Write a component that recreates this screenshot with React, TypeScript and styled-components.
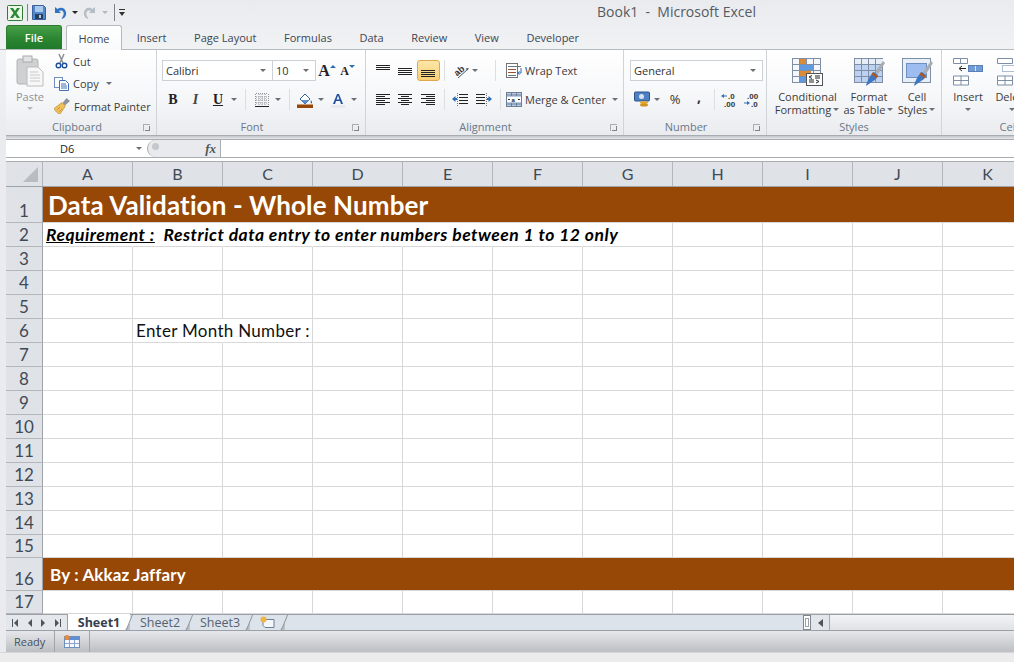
import React from 'react';
import styled, { createGlobalStyle } from 'styled-components';

const UI_FONT = '"Open Sans", "Noto Sans", sans-serif';
const SHEET_FONT = 'Lato, "Open Sans", sans-serif';

const GlobalStyle = createGlobalStyle`
  html, body { margin: 0; padding: 0; background: #eceef1; }
  * { box-sizing: border-box; }
`;

const Window = styled.div`
  width: 1014px;
  height: 662px;
  overflow: hidden;
  display: flex;
  flex-direction: column;
  font-family: ${UI_FONT};
  font-size: 11px;
  color: #3c3c3c;
  background: linear-gradient(#e9ebee 0, #f1f2f4 50px, #e9ebee 140px);
`;

const TitleBar = styled.div`
  height: 25px;
  flex: none;
  display: flex;
  align-items: center;
  padding-left: 7px;
  position: relative;
`;

const QuickTool = styled.span<{ $w: number }>`
  width: ${({ $w }) => $w}px;
  height: 18px;
  display: inline-flex;
  align-items: center;
  justify-content: center;
  flex: none;
`;

const QuickSep = styled.span`
  width: 1px;
  height: 17px;
  background: #7d8288;
  flex: none;
`;

const WindowTitle = styled.div`
  position: absolute;
  left: 597px;
  top: 2px;
  font-size: 14px;
  line-height: 20px;
  color: #555b62;
  white-space: pre;
`;

const TabStrip = styled.div`
  height: 25px;
  flex: none;
  display: flex;
  align-items: flex-end;
  padding-left: 6px;
  border-bottom: 1px solid #b6b9be;
`;

const FileTab = styled.div`
  width: 56px;
  height: 24px;
  display: flex;
  align-items: center;
  justify-content: center;
  color: #fff;
  font-weight: 600;
  font-size: 11px;
  border: 1px solid #2c7a2f;
  border-bottom: none;
  border-radius: 3px 3px 0 0;
  background: linear-gradient(#47a048, #2b8531 55%, #1f7a2b);
  margin-right: 4px;
`;

const HomeTab = styled.div`
  width: 56px;
  height: 25px;
  margin-bottom: -1px;
  margin-right: 1px;
  display: flex;
  align-items: center;
  justify-content: center;
  color: #3b4654;
  background: linear-gradient(#ffffff, #f9fafb);
  border: 1px solid #b6b9be;
  border-bottom: none;
  border-radius: 3px 3px 0 0;
`;

const MenuTab = styled.div`
  height: 24px;
  padding: 0 13.8px;
  display: flex;
  align-items: center;
  color: #3b4654;
  white-space: nowrap;
`;

const Ribbon = styled.div`
  height: 86px;
  flex: none;
  display: flex;
  margin-left: 6px;
  overflow: hidden;
  background: linear-gradient(#ffffff, #f6f7f9 55%, #e9ebee);
  border-bottom: 1px solid #a9adb2;
`;

const RibbonShade = styled.div`
  height: 3px;
  flex: none;
  margin-left: 6px;
  background: linear-gradient(#c3c6ca, #e6e8eb);
`;

const Group = styled.section<{ $w: number }>`
  width: ${({ $w }) => $w}px;
  flex: none;
  display: flex;
  flex-direction: column;
  position: relative;
  border-right: 1px solid #d0d3d8;
`;

const GroupBody = styled.div<{ $pad?: number }>`
  flex: 1;
  display: flex;
  flex-direction: column;
  padding: 10px 0 0 ${({ $pad }) => $pad ?? 0}px;
  min-height: 0;
`;

const GroupLabel = styled.div<{ $right?: number }>`
  height: 16px;
  line-height: 15px;
  flex: none;
  text-align: center;
  padding-right: ${({ $right }) => $right ?? 0}px;
  color: #6a7788;
  white-space: nowrap;
`;

const Launcher = styled.span`
  position: absolute;
  right: 6px;
  bottom: 4px;
  width: 7px;
  height: 7px;
  border-left: 1px solid #a9adb3;
  border-top: 1px solid #a9adb3;
  &::after {
    content: '';
    position: absolute;
    right: 0;
    bottom: 0;
    width: 4px;
    height: 4px;
    border-right: 1px solid #7d848c;
    border-bottom: 1px solid #7d848c;
  }
`;

const ToolRow = styled.div<{ $top?: number }>`
  display: flex;
  align-items: center;
  height: 21px;
  margin-top: ${({ $top }) => $top ?? 0}px;
`;

const Tool = styled.span<{ $w: number; $on?: boolean }>`
  width: ${({ $w }) => $w}px;
  height: 21px;
  flex: none;
  display: inline-flex;
  align-items: center;
  justify-content: center;
  border-radius: 3px;
  border: ${({ $on }) => ($on ? '1px solid #e0a84c' : 'none')};
  background: ${({ $on }) => ($on ? 'linear-gradient(#fde6a8, #fbcf75)' : 'none')};
`;

const ToolSep = styled.span<{ $w: number }>`
  width: ${({ $w }) => $w}px;
  height: 21px;
  flex: none;
  display: inline-flex;
  justify-content: center;
  &::after {
    content: '';
    width: 1px;
    background: #dcdee2;
  }
`;

const Caret = styled.span<{ $w?: number; $tone?: string }>`
  width: ${({ $w }) => $w ?? 10}px;
  flex: none;
  display: inline-flex;
  justify-content: center;
  &::after {
    content: '';
    border-left: 3px solid transparent;
    border-right: 3px solid transparent;
    border-top: 3px solid ${({ $tone }) => $tone ?? '#6b7076'};
  }
`;

const Glyph = styled.span<{ $size?: number; $italic?: boolean; $under?: boolean; $up?: number; $tone?: string; $weight?: number }>`
  font-family: "Liberation Serif", serif;
  font-weight: ${({ $weight }) => $weight ?? 700};
  font-size: ${({ $size }) => $size ?? 14}px;
  font-style: ${({ $italic }) => ($italic ? 'italic' : 'normal')};
  text-decoration: ${({ $under }) => ($under ? 'underline' : 'none')};
  color: ${({ $tone }) => $tone ?? '#222'};
  margin-top: ${({ $up }) => -($up ?? 0)}px;
  line-height: 1;
`;

const SansGlyph = styled(Glyph)`
  font-family: ${UI_FONT};
`;

const Clip = styled.div`
  display: flex;
  height: 100%;
`;

const PasteButton = styled.div`
  width: 48px;
  flex: none;
  display: flex;
  flex-direction: column;
  align-items: center;
  color: #8e9298;
  margin-top: -5px;
  line-height: 14px;
  gap: 3px;
`;

const ClipList = styled.div`
  display: flex;
  flex-direction: column;
  gap: 0.5px;
  margin-top: -10px;
`;

const ClipItem = styled.div`
  height: 22px;
  display: flex;
  align-items: center;
  gap: 4px;
  white-space: nowrap;
`;

const ComboBox = styled.div<{ $w: number }>`
  width: ${({ $w }) => $w}px;
  height: 21px;
  flex: none;
  display: flex;
  align-items: center;
  justify-content: space-between;
  padding: 0 4px 0 3px;
  background: #fff;
  border: 1px solid #cdd0d5;
  margin-left: -1px;
  &:first-child { margin-left: 0; }
  color: #333;
`;

const TextTool = styled.div`
  display: flex;
  align-items: center;
  gap: 3px;
  height: 21px;
  white-space: nowrap;
`;

const BigRow = styled.div`
  display: flex;
  margin-top: -5px;
`;

const BigButton = styled.div<{ $w: number }>`
  width: ${({ $w }) => $w}px;
  flex: none;
  display: flex;
  flex-direction: column;
  align-items: center;
  text-align: center;
  line-height: 13px;
  white-space: nowrap;
`;

const BigIcon = styled.div`
  height: 34px;
  margin-bottom: 1px;
  display: flex;
  align-items: center;
`;

const BigLine = styled.div`
  display: flex;
  align-items: center;
  height: 13px;
`;

const FormulaBar = styled.div`
  flex: none;
  margin-left: 6px;
  display: flex;
  align-items: stretch;
  height: 19px;
  background: #fff;
  border-top: 1px solid #a9adb2;
  border-bottom: 1px solid #a9adb2;
`;

const NameBox = styled.div`
  width: 141px;
  flex: none;
  display: flex;
  align-items: center;
  padding: 0 3px 0 54px;
  justify-content: space-between;
  color: #222;
`;

const FxZone = styled.div`
  width: 74px;
  flex: none;
  display: flex;
  align-items: center;
  justify-content: space-between;
  padding: 0 4px 0 4px;
  border-right: 1px solid #a9adb2;
  border-left: 1px solid #a9adb2;
  border-radius: 9px 0 0 9px;
  background: #e8eaed;
`;

const Knob = styled.span`
  width: 7px;
  height: 7px;
  margin-top: -4px;
  border-radius: 50%;
  background: #c4c7cb;
`;

const FxMark = styled.span`
  font-family: "Liberation Serif", serif;
  font-style: italic;
  font-weight: 700;
  font-size: 13px;
  color: #555;
`;

const FormulaGap = styled.div`
  height: 4px;
  flex: none;
  margin-left: 6px;
  background: #fff;
  border-bottom: 1px solid #a9adb2;
`;

const Sheet = styled.div`
  flex: none;
  margin-left: 6px;
  background: #fff;
  overflow: hidden;
  font-family: ${SHEET_FONT};
`;

const HeaderRow = styled.div`
  display: flex;
  height: 25px;
  background: #dfe2e7;
  border-bottom: 1px solid #9ea3a9;
`;

const Corner = styled.div`
  width: 37px;
  flex: none;
  display: flex;
  align-items: flex-end;
  justify-content: flex-end;
  padding: 0 4px 4px 0;
  border-right: 1px solid #b3b7bc;
  &::after {
    content: '';
    border-left: 15px solid transparent;
    border-bottom: 15px solid #b9bdc2;
  }
`;

const ColHead = styled.div`
  width: 90px;
  flex: none;
  text-align: center;
  line-height: 24px;
  font-size: 16px;
  color: #3f4a57;
  border-right: 1px solid #b3b7bc;
`;

const SheetRow = styled.div<{ $h: number }>`
  display: flex;
  height: ${({ $h }) => $h}px;
`;

const RowHead = styled.div`
  width: 37px;
  flex: none;
  display: flex;
  align-items: flex-end;
  justify-content: center;
  padding-bottom: 1px;
  font-size: 17px;
  line-height: 21px;
  color: #3f4a57;
  background: #dfe2e7;
  border-right: 1px solid #9ea3a9;
  border-bottom: 1px solid #b3b7bc;
`;

const Cell = styled.div<{ $open?: boolean }>`
  width: 90px;
  flex: none;
  position: relative;
  white-space: pre;
  line-height: 23px;
  font-size: 17px;
  color: #111;
  border-bottom: 1px solid #d8d8d8;
  border-right: 1px solid ${({ $open }) => ($open ? 'transparent' : '#d8d8d8')};
`;

const CellText = styled.span<{ $left: number }>`
  position: relative;
  z-index: 1;
  letter-spacing: 0.3px;
  padding-left: ${({ $left }) => $left}px;
`;

const Requirement = styled.span`
  font-weight: 700;
  font-style: italic;
  font-size: 17.5px;
  letter-spacing: 0.5px;
  padding-left: 3px;
  color: #000;
  position: relative;
  z-index: 1;
  line-height: 24px;
`;

const Underlined = styled.span`
  text-decoration: underline;
`;

const Banner = styled.div<{ $size: number; $left: number; $track: number }>`
  flex: 1;
  display: flex;
  align-items: center;
  background: #974706;
  color: #fff;
  font-weight: 700;
  white-space: nowrap;
  font-size: ${({ $size }) => $size}px;
  letter-spacing: ${({ $track }) => $track}px;
  padding-left: ${({ $left }) => $left}px;
  border-bottom: 1px solid #d8d8d8;
`;

const SheetTabs = styled.div`
  height: 17px;
  flex: none;
  margin-left: 6px;
  display: flex;
  align-items: stretch;
  background: #dde3ea;
  border-top: 1px solid #9aa0a6;
  border-bottom: 1px solid #9aa0a6;
`;

const TabNav = styled.div`
  width: 62px;
  flex: none;
  display: flex;
  align-items: center;
  justify-content: space-around;
  padding: 0 2px;
  background: #e4e7ec;
  border-right: 1px solid #9aa0a6;
`;

const SheetTab = styled.div<{ $active?: boolean; $w: number }>`
  width: ${({ $w }) => $w}px;
  flex: none;
  position: relative;
  display: flex;
  align-items: center;
  justify-content: center;
  font-size: 12.5px;
  font-weight: ${({ $active }) => ($active ? 700 : 400)};
  color: ${({ $active }) => ($active ? '#37404c' : '#56616f')};
  background: ${({ $active }) => ($active ? '#fff' : 'transparent')};
  margin-top: ${({ $active }) => ($active ? '-1px' : '0')};
  &::before {
    content: '';
    position: absolute;
    right: 0;
    bottom: 0;
    border-left: 5px solid transparent;
    border-bottom: 7px solid #bcc2c9;
  }
  &::after {
    content: '';
    position: absolute;
    right: 0;
    top: 0;
    bottom: 0;
    width: 1px;
    background: #8d949b;
    transform: skewX(-22deg);
  }
`;

const TabSpacer = styled.div`
  flex: 1;
`;

const SplitHandle = styled.div`
  width: 8px;
  flex: none;
  background: #fff;
  border: 1px solid #7f858b;
  display: flex;
  justify-content: center;
  &::after {
    content: '';
    width: 2px;
    margin: 2px 0;
    border: 1px solid #9aa0a6;
  }
`;

const ScrollArrow = styled.div`
  width: 18px;
  flex: none;
  display: flex;
  align-items: center;
  justify-content: center;
  background: #e3e6ea;
  &::after {
    content: '';
    border-top: 4px solid transparent;
    border-bottom: 4px solid transparent;
    border-right: 5px solid #4d555d;
  }
`;

const ScrollThumb = styled.div`
  width: 185px;
  flex: none;
  background: linear-gradient(#f2f3f5, #dfe2e6);
  border-left: 1px solid #a5aab0;
`;

const StatusBar = styled.div`
  height: 21px;
  flex: none;
  margin-left: 6px;
  display: flex;
  align-items: stretch;
  background: linear-gradient(#e6e7ea, #bcbfc3);
  color: #47505b;
`;

const StatusCell = styled.div<{ $w: number; $pad?: number }>`
  width: ${({ $w }) => $w}px;
  flex: none;
  display: flex;
  align-items: center;
  padding-left: ${({ $pad }) => $pad ?? 0}px;
  border-right: 1px solid #a2a6ab;
`;

const FootStrip = styled.div`
  flex: 1;
  background: #ececec;
  border-top: 1px solid #d6d6d6;
`;

const IconSvg = styled.svg`
  display: block;
  flex: none;
`;

// Small drawings
const Svg = ({ w, h, children }: { w: number; h: number; children: React.ReactNode }) => (
  <IconSvg width={w} height={h} viewBox={`0 0 ${w} ${h}`}>
    {children}
  </IconSvg>
);

const ExcelLogo = () => (
  <Svg w={16} h={16}>
    <rect x=".5" y=".5" width="15" height="15" rx="1" fill="#eef5ea" stroke="#2f7d32" />
    <path d="M3 3h3l2 3 2-3h3l-3.5 5 3.5 5h-3l-2-3-2 3H3l3.5-5z" fill="#2a8a34" />
  </Svg>
);

const SaveIcon = () => (
  <Svg w={14} h={15}>
    <path d="M.5.500h11l2 2v12H.5z" fill="#4f86cc" stroke="#3a629c" />
    <rect x="3" y="1" width="8" height="6" fill="#a9c8ea" />
    <rect x="3" y="9" width="8" height="5" fill="#27405f" />
    <rect x="7" y="10" width="2" height="3" fill="#b9c9de" />
  </Svg>
);

const UndoIcon = ({ color }: { color: string }) => (
  <Svg w={13} h={14}>
    <path d="M1 1v6h6L5 5c3-1.500 5.500.5 4.500 4l-2 4c4-1 5-4 4.500-7C11 2 7 .5 3.500 3z" fill={color} />
  </Svg>
);

const RedoIcon = ({ color }: { color: string }) => (
  <Svg w={13} h={14}>
    <path d="M12 1v6H6l2-2C5 3.500 2.500 5.500 3.500 9l2 4C1.500 12 .5 9 1 6c1-4 5-5.500 8.500-3z" fill={color} />
  </Svg>
);

const CustomizeIcon = () => (
  <Svg w={8} h={9}>
    <path d="M1 1.500h6" stroke="#333" />
    <path d="M1 4h6L4 8z" fill="#333" />
  </Svg>
);

const PasteIcon = () => (
  <Svg w={28} h={32}>
    <rect x="1" y="4" width="21" height="25" rx="2" fill="#cfd0d2" stroke="#b3b4b6" />
    <rect x="7" y="1" width="9" height="6" fill="#e2e3e4" stroke="#a9aaac" />
    <path d="M11 12h11l5 5v14H11z" fill="#f7f7f7" stroke="#bcbcbc" />
    <path d="M14 17h8M14 20h10M14 23h10M14 26h10" stroke="#c9c9c9" />
  </Svg>
);

const CutIcon = () => (
  <Svg w={15} h={16}>
    <path d="M5 1l4 9M10 1L6 10" stroke="#8a8f96" strokeWidth="1.500" />
    <circle cx="4.500" cy="12.500" r="2.300" fill="none" stroke="#1f4f9c" strokeWidth="1.400" />
    <circle cx="10.500" cy="12.500" r="2.300" fill="none" stroke="#1f4f9c" strokeWidth="1.400" />
  </Svg>
);

const CopyIcon = () => (
  <Svg w={15} h={15}>
    <rect x=".5" y="1.500" width="8" height="10" fill="#fff" stroke="#6e8fbd" />
    <path d="M5.500 4.500h6l3 3v7h-9z" fill="#fff" stroke="#3f6fb5" />
    <path d="M7 8h5M7 10h6M7 12h6" stroke="#3f6fb5" />
  </Svg>
);

const BrushIcon = () => (
  <Svg w={16} h={16}>
    <path d="M9 5l3.500-4.500L15.500 3 11 7z" fill="#8f949a" stroke="#6f747a" strokeWidth=".5" />
    <path d="M0 10.500l8-6 3.500 3.500-5.500 8C3.500 15.500 1 13 0 10.500z" fill="#edc05c" stroke="#b97f25" strokeWidth=".6" />
    <path d="M3 12l3-3M5 14l3-3" stroke="#c18a2d" strokeWidth=".7" />
  </Svg>
);

const BorderIcon = () => (
  <Svg w={14} h={14}>
    <path d="M.5 1v11M4 1v11M7 1v11M10 1v11M13.500 1v11M1 .5h12M1 4h12M1 7h12M1 10h12" stroke="#8f949a" strokeDasharray="1 1" />
    <path d="M0 13.500h14" stroke="#222" />
  </Svg>
);

const FillIcon = () => (
  <Svg w={16} h={16}>
    <path d="M3 7l5-5 5 5-5 5z" fill="#fff" stroke="#2f5f9e" />
    <path d="M4 8h8l-4 4z" fill="#5d90cf" />
    <path d="M14 8c1 2 1.500 3 .5 3.500-1 0-1-2-.5-3.500z" fill="#2f5f9e" />
    <rect x="0" y="12.500" width="16" height="3.500" fill="#974706" />
  </Svg>
);

const FontColorIcon = () => (
  <Svg w={14} h={16}>
    <rect x="0" y="13" width="14" height="3" fill="#e8e9eb" />
    <path d="M2 12l4-10h2l4 10h-2l-1-3H5l-1 3zM5.500 7.500h3L7 3.500z" fill="#1f4f9c" fillRule="evenodd" />
  </Svg>
);

const SizeArrow = ({ up }: { up: boolean }) => (
  <Svg w={6} h={14}>
    <path d={up ? 'M0 4l3-3 3 3z' : 'M0 1l3 3 3-3z'} fill="#2f6db5" />
  </Svg>
);

const Lines = ({ rows, pad = 0 }: { rows: [number, number][]; pad?: number }) => (
  <Svg w={15} h={13}>
    {rows.map(([x, w], i) => (
      <rect key={i} x={x} y={pad + i * 2} width={w} height="1" fill="#222" />
    ))}
  </Svg>
);

const full: [number, number][] = [[0, 14], [0, 14], [0, 14]];
const TopAlign = () => <Lines rows={full} pad={1} />;
const MidAlign = () => <Lines rows={[...full, [0, 14]]} pad={4} />;
const BotAlign = () => <Lines rows={[...full, [0, 14]]} pad={6} />;
const LeftAlign = () => <Lines rows={[[0, 14], [0, 9], [0, 14], [0, 9], [0, 14], [0, 9]]} pad={1} />;
const CenterAlign = () => <Lines rows={[[0, 14], [3, 8], [0, 14], [3, 8], [0, 14], [3, 8]]} pad={1} />;
const RightAlign = () => <Lines rows={[[0, 14], [5, 9], [0, 14], [5, 9], [0, 14], [5, 9]]} pad={1} />;

const OrientIcon = () => (
  <Svg w={17} h={16}>
    <text x="1" y="11" fontFamily="'Liberation Sans', sans-serif" fontWeight="700" fontSize="9" fill="#333" transform="rotate(-40 6 8)">ab</text>
    <path d="M5 15L15 6" stroke="#555" />
    <path d="M16 5l-3.500.5 2 2z" fill="#555" />
  </Svg>
);

const IndentIcon = ({ flip }: { flip?: boolean }) => (
  <Svg w={16} h={14}>
    <g transform={flip ? 'matrix(-1 0 0 1 16 0)' : undefined}>
      <path d="M7 1.500h9M7 4.500h9M7 7.500h9M7 10.500h9" stroke="#222" />
      <path d="M5.500 0v14" stroke="#777" strokeDasharray="1 1" />
      <path d="M0 6l3.500-3v2H5v2H3.500v2z" fill="#2f6db5" />
    </g>
  </Svg>
);

const WrapIcon = () => (
  <Svg w={16} h={15}>
    <rect x=".5" y=".5" width="11" height="14" fill="#fff" stroke="#70757b" />
    <path d="M2 3.500h13" stroke="#70757b" />
    <path d="M2 6.500h8M2 9.500h8" stroke="#a0522d" />
    <path d="M2 12.500h8" stroke="#70757b" />
    <path d="M15 5v5h-3M13.500 8.500l-2 1.500 2 1.500" stroke="#2f6db5" fill="none" />
  </Svg>
);

const MergeIcon = () => (
  <Svg w={16} h={15}>
    <rect x=".5" y=".5" width="15" height="14" fill="#b8cbe4" stroke="#6d7f97" />
    <rect x="1" y="5" width="14" height="5" fill="#fff" />
    <path d="M1 3h14M1 12h14M5.500 1v3M10.500 1v3M5.500 11v3M10.500 11v3" stroke="#6d7f97" />
    <text x="5.500" y="9.500" fontFamily="'Liberation Sans', sans-serif" fontWeight="700" fontSize="6" fill="#222">a</text>
    <path d="M2 7.500h2M12 7.500h2" stroke="#333" />
  </Svg>
);

const CurrencyIcon = () => (
  <Svg w={16} h={17}>
    <rect x=".5" y="1" width="15" height="9" rx="1" fill="#4f80c2" stroke="#2a548e" />
    <circle cx="7.500" cy="5.500" r="2.500" fill="#d7e3f2" />
    <ellipse cx="10" cy="11.500" rx="4" ry="1.500" fill="#e3a92e" />
    <ellipse cx="10" cy="14" rx="4" ry="1.500" fill="#cf9322" />
  </Svg>
);

const DecimalIcon = ({ more }: { more?: boolean }) => (
  <Svg w={17} h={16}>
    <text x={more ? 3 : 7} y="7" fontFamily="'Liberation Sans', sans-serif" fontWeight="700" fontSize="8" fill="#333">{more ? '.00' : '.0'}</text>
    <text x={more ? 7 : 3} y="15" fontFamily="'Liberation Sans', sans-serif" fontWeight="700" fontSize="8" fill="#333">{more ? '.0' : '.00'}</text>
    {more ? (
      <path d="M0 10.500h3V9l3 2-3 2v-1.500H0z" fill="#2f6db5" />
    ) : (
      <path d="M6 3.500H3V2L0 4l3 2V4.500h3z" fill="#2f6db5" />
    )}
  </Svg>
);

const CondFormatIcon = () => (
  <Svg w={31} h={28}>
    {[0, 7, 14, 21].map(x => [0, 6, 12, 18].map(y => (
      <rect key={`${x}-${y}`} x={x + .5} y={y + .5} width="7" height="6" fill="#f4f7fb" stroke="#7d8ea5" />
    )))}
    <rect x="8" y="1" width="6" height="5" fill="#d98b3a" />
    <rect x="8" y="7" width="14" height="5" fill="#5f9ae0" />
    <rect x="8" y="13" width="11" height="5" fill="#d98b3a" />
    <rect x="8" y="19" width="6" height="5" fill="#5f9ae0" />
    <rect x="14.500" y="15.500" width="16" height="12" fill="#fff" stroke="#555" />
    <path d="M17 19l3-1.500M17 19l3 1.500M23 18h5M23 20h5M17 24h5M17 22h5M24 22l3 1.500-3 1.500" stroke="#222" fill="none" />
  </Svg>
);

const Paintbrush = () => (
  <>
    <path d="M29 3l2 2-7 11-3-2z" fill="#a8adb3" />
    <path d="M20 14l4 3-2 4-10 7c1-5 4-11 8-14z" fill="#3f76c4" />
    <path d="M19 14l5 4-1.500 2.500-5-4z" fill="#a65a2c" />
  </>
);

const TableIcon = () => (
  <Svg w={31} h={28}>
    <rect x=".5" y=".5" width="28" height="24" fill="#bcd2f0" stroke="#7d8ea5" />
    <rect x="1" y="1" width="28" height="5" fill="#e7eef8" />
    <path d="M7.500 1v24M14.500 1v24M21.500 1v24M1 6.500h28M1 12.500h28M1 18.500h28" stroke="#7d8ea5" />
    <Paintbrush />
  </Svg>
);

const CellStyleIcon = () => (
  <Svg w={31} h={28}>
    <rect x=".5" y=".5" width="28" height="24" fill="#e7eef8" stroke="#7d8ea5" />
    <rect x="4.500" y="5.500" width="20" height="14" fill="#9dbcf0" stroke="#6f8fbe" />
    <Paintbrush />
  </Svg>
);

const InsertIcon = () => (
  <Svg w={31} h={28}>
    <path d="M.5.500h14v5H.5zM.5 18h15v9H.5zM8 18v9M1 22.500h14M7.500 1v4" fill="#fff" stroke="#7d8ea5" />
    <rect x="15.500" y="7.500" width="14" height="6" fill="#6f9bd6" stroke="#5a7fb3" />
    <path d="M22.500 8v5" stroke="#dbe6f5" />
    <path d="M13 10.500H7M9 8l-3 2.500L9 13" stroke="#222" fill="none" />
  </Svg>
);

const DeleteIcon = () => (
  <Svg w={31} h={28}>
    <path d="M.5.500h15v5H.5zM.5 18h15v9H.5zM8 18v9M1 22.500h14" fill="#fff" stroke="#7d8ea5" />
    <rect x="5.500" y="7.500" width="14" height="6" fill="#fff" stroke="#5a7fb3" strokeDasharray="1 1" />
    <path d="M20 8l6 6" stroke="#d98b3a" strokeWidth="2" />
  </Svg>
);

const NavIcon = ({ d, bar }: { d: 'l' | 'r'; bar?: boolean }) => (
  <Svg w={7} h={8}>
    <path d={d === 'l' ? 'M6 0v8L2 4z' : 'M1 0v8l4-4z'} fill="#4d555d" />
    {bar && <path d={d === 'l' ? 'M.5 0v8' : 'M6.500 0v8'} stroke="#4d555d" />}
  </Svg>
);

const NewSheetIcon = () => (
  <Svg w={15} h={13}>
    <path d="M3 3.500h11v8H5l-2-2z" fill="#f3f6fa" stroke="#6d7f97" />
    <circle cx="3.500" cy="3.500" r="3" fill="#f0b440" />
  </Svg>
);

const MacroIcon = () => (
  <Svg w={16} h={13}>
    <rect x=".5" y="1.500" width="15" height="11" fill="#f4f7fb" stroke="#6d8fbd" />
    <rect x="1" y="2" width="14" height="3" fill="#5f8fcf" />
    <path d="M5.500 5v7M10.500 5v7M1 8.500h14" stroke="#8aa5c9" />
    <circle cx="3" cy="2.500" r="2.500" fill="#e8883a" />
  </Svg>
);

const COLUMNS = ['A', 'B', 'C', 'D', 'E', 'F', 'G', 'H', 'I', 'J', 'K'];

const PlainCells = () => (
  <>
    {COLUMNS.map(c => (
      <Cell key={c} />
    ))}
  </>
);

const App = () => (
  <Window>
    <GlobalStyle />
    <TitleBar>
      <QuickTool $w={16}><ExcelLogo /></QuickTool>
      <QuickTool $w={4} />
      <QuickSep />
      <QuickTool $w={21}><SaveIcon /></QuickTool>
      <QuickTool $w={22}><UndoIcon color="#2f74c4" /></QuickTool>
      <Caret $w={7} $tone="#222" />
      <QuickTool $w={23}><RedoIcon color="#b7bdc4" /></QuickTool>
      <Caret $w={7} $tone="#b5b8bd" />
      <QuickTool $w={6} />
      <QuickSep />
      <QuickTool $w={14}><CustomizeIcon /></QuickTool>
      <WindowTitle>{'Book1  -  Microsoft Excel'}</WindowTitle>
    </TitleBar>

    <TabStrip>
      <FileTab>File</FileTab>
      <HomeTab>Home</HomeTab>
      {['Insert', 'Page Layout', 'Formulas', 'Data', 'Review', 'View', 'Developer'].map(t => (
        <MenuTab key={t}>{t}</MenuTab>
      ))}
    </TabStrip>

    <Ribbon>
      <Group $w={151}>
        <GroupBody>
          <Clip>
            <PasteButton>
              <PasteIcon />
              <span>Paste</span>
              <Caret $tone="#b5b8bd" />
            </PasteButton>
            <ClipList>
              <ClipItem><CutIcon />Cut</ClipItem>
              <ClipItem><CopyIcon />Copy<Caret $w={12} /></ClipItem>
              <ClipItem><BrushIcon />Format Painter</ClipItem>
            </ClipList>
          </Clip>
        </GroupBody>
        <GroupLabel $right={8}>Clipboard</GroupLabel>
        <Launcher />
      </Group>

      <Group $w={209}>
        <GroupBody $pad={5}>
          <ToolRow>
            <ComboBox $w={111}>Calibri<Caret /></ComboBox>
            <ComboBox $w={44}>10<Caret /></ComboBox>
            <Tool $w={22}><Glyph $size={16}>A</Glyph><SizeArrow up /></Tool>
            <Tool $w={19}><Glyph $size={12}>A</Glyph><SizeArrow up={false} /></Tool>
          </ToolRow>
          <ToolRow $top={8}>
            <Tool $w={22}><Glyph>B</Glyph></Tool>
            <Tool $w={23}><Glyph $italic $tone="#444">I</Glyph></Tool>
            <Tool $w={22}><Glyph $under>U</Glyph></Tool>
            <Caret />
            <ToolSep $w={12} />
            <Tool $w={22}><BorderIcon /></Tool>
            <Caret />
            <ToolSep $w={12} />
            <Tool $w={20}><FillIcon /></Tool>
            <Caret $w={12} />
            <Tool $w={22}><FontColorIcon /></Tool>
            <Caret />
          </ToolRow>
        </GroupBody>
        <GroupLabel $right={18}>Font</GroupLabel>
        <Launcher />
      </Group>

      <Group $w={258}>
        <GroupBody $pad={6}>
          <ToolRow>
            <Tool $w={22}><TopAlign /></Tool>
            <Tool $w={23}><MidAlign /></Tool>
            <Tool $w={23} $on><BotAlign /></Tool>
            <ToolSep $w={8} />
            <Tool $w={36}><OrientIcon /><Caret $w={9} /></Tool>
            <ToolSep $w={22} />
            <TextTool><WrapIcon />Wrap Text</TextTool>
          </ToolRow>
          <ToolRow $top={8}>
            <Tool $w={22}><LeftAlign /></Tool>
            <Tool $w={23}><CenterAlign /></Tool>
            <Tool $w={23}><RightAlign /></Tool>
            <ToolSep $w={8} />
            <Tool $w={24}><IndentIcon /></Tool>
            <Tool $w={23}><IndentIcon flip /></Tool>
            <ToolSep $w={11} />
            <TextTool><MergeIcon />Merge &amp; Center<Caret $w={12} /></TextTool>
          </ToolRow>
        </GroupBody>
        <GroupLabel $right={18}>Alignment</GroupLabel>
        <Launcher />
      </Group>

      <Group $w={143}>
        <GroupBody $pad={6}>
          <ToolRow>
            <ComboBox $w={133}>General<Caret /></ComboBox>
          </ToolRow>
          <ToolRow $top={8}>
            <Tool $w={24}><CurrencyIcon /></Tool>
            <Caret $w={6} />
            <Tool $w={4} />
            <Tool $w={22}><SansGlyph $size={13} $tone="#333" $weight={400}>%</SansGlyph></Tool>
            <Tool $w={2} />
            <Tool $w={22}><SansGlyph $size={14} $up={5} $tone="#333">,</SansGlyph></Tool>
            <ToolSep $w={8} />
            <Tool $w={23}><DecimalIcon /></Tool>
            <Tool $w={23}><DecimalIcon more /></Tool>
          </ToolRow>
        </GroupBody>
        <GroupLabel $right={18}>Number</GroupLabel>
        <Launcher />
      </Group>

      <Group $w={175}>
        <GroupBody $pad={7}>
          <BigRow>
            <BigButton $w={67}>
              <BigIcon><CondFormatIcon /></BigIcon>
              <BigLine>Conditional</BigLine>
              <BigLine>Formatting<Caret $w={9} /></BigLine>
            </BigButton>
            <BigButton $w={56}>
              <BigIcon><TableIcon /></BigIcon>
              <BigLine>Format</BigLine>
              <BigLine>as Table<Caret $w={9} /></BigLine>
            </BigButton>
            <BigButton $w={40}>
              <BigIcon><CellStyleIcon /></BigIcon>
              <BigLine>Cell</BigLine>
              <BigLine>Styles<Caret $w={9} /></BigLine>
            </BigButton>
          </BigRow>
        </GroupBody>
        <GroupLabel>Styles</GroupLabel>
      </Group>

      <Group $w={140}>
        <GroupBody>
          <BigRow>
            <BigButton $w={52}>
              <BigIcon><InsertIcon /></BigIcon>
              <BigLine>Insert</BigLine>
              <BigLine><Caret /></BigLine>
            </BigButton>
            <BigButton $w={36}>
              <BigIcon><DeleteIcon /></BigIcon>
              <BigLine>Delete</BigLine>
              <BigLine><Caret /></BigLine>
            </BigButton>
          </BigRow>
        </GroupBody>
        <GroupLabel>Cells</GroupLabel>
      </Group>
    </Ribbon>
    <RibbonShade />

    <FormulaBar>
      <NameBox>D6<Caret /></NameBox>
      <FxZone><Knob /><FxMark>fx</FxMark></FxZone>
    </FormulaBar>
    <FormulaGap />

    <Sheet>
      <HeaderRow>
        <Corner />
        {COLUMNS.map(c => <ColHead key={c}>{c}</ColHead>)}
      </HeaderRow>
      <SheetRow $h={36}>
        <RowHead>1</RowHead>
        <Banner $size={26} $left={5} $track={0.12}>Data Validation - Whole Number</Banner>
      </SheetRow>
      <SheetRow $h={24}>
        <RowHead>2</RowHead>
        <Cell $open>
          <Requirement><Underlined>Requirement :</Underlined>{'  Restrict data entry to enter numbers between 1 to 12 only'}</Requirement>
        </Cell>
        {COLUMNS.slice(1).map((c, i) => <Cell key={c} $open={i < 5} />)}
      </SheetRow>
      {[3, 4, 5].map(n => (
        <SheetRow $h={24} key={n}>
          <RowHead>{n}</RowHead>
          <PlainCells />
        </SheetRow>
      ))}
      <SheetRow $h={24}>
        <RowHead>6</RowHead>
        <Cell />
        <Cell $open><CellText $left={3}>Enter Month Number :</CellText></Cell>
        {COLUMNS.slice(2).map(c => <Cell key={c} />)}
      </SheetRow>
      {[7, 8, 9, 10, 11, 12, 13, 14, 15].map(n => (
        <SheetRow $h={n === 15 ? 23 : 24} key={n}>
          <RowHead>{n}</RowHead>
          <PlainCells />
        </SheetRow>
      ))}
      <SheetRow $h={33}>
        <RowHead>16</RowHead>
        <Banner $size={17} $left={7} $track={0.15}>By : Akkaz Jaffary</Banner>
      </SheetRow>
      <SheetRow $h={23}>
        <RowHead>17</RowHead>
        <PlainCells />
      </SheetRow>
    </Sheet>

    <SheetTabs>
      <TabNav>
        <NavIcon d="l" bar />
        <NavIcon d="l" />
        <NavIcon d="r" />
        <NavIcon d="r" bar />
      </TabNav>
      <SheetTab $w={62} $active>Sheet1</SheetTab>
      <SheetTab $w={60}>Sheet2</SheetTab>
      <SheetTab $w={60}>Sheet3</SheetTab>
      <SheetTab $w={35}><NewSheetIcon /></SheetTab>
      <TabSpacer />
      <SplitHandle />
      <ScrollArrow />
      <ScrollThumb />
    </SheetTabs>

    <StatusBar>
      <StatusCell $w={49} $pad={8}>Ready</StatusCell>
      <StatusCell $w={35} $pad={9}><MacroIcon /></StatusCell>
    </StatusBar>
    <FootStrip />
  </Window>
);

export default App;
